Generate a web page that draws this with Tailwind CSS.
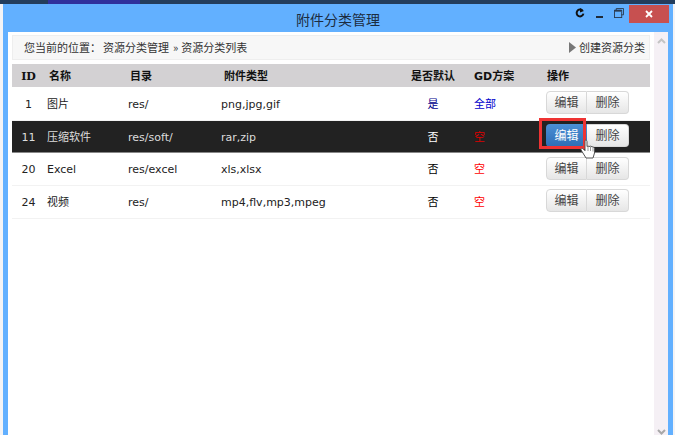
<!doctype html>
<html>
<head>
  <meta charset="UTF-8">
  <script src="https://cdn.jsdelivr.net/npm/@tailwindcss/browser@4"></script>
</head>
<body class="bg-white">
  <div class="w-[675px] h-[435px] overflow-hidden relative flex flex-col bg-[#f4f4f6] font-['DejaVu_Sans','Noto_Sans_CJK_SC',sans-serif] text-[11px] text-[#222]">
    <!-- taskbar strip behind the dialog -->
    <div class="h-[4px] shrink-0 bg-[#233d5c] flex pl-[48px]">
      <div class="w-[92px] bg-[#30309c]"></div>
    </div>
    <div class="flex-1 ml-[3px] mr-[2px] bg-[#62b0ff] flex flex-col px-[5px] min-h-0">
      <!-- title bar -->
      <div class="h-[28px] shrink-0 relative flex items-center justify-center pt-[4px] text-[14px] text-[#1c2c40]">
        <span class="font-['Noto_Sans_CJK_SC',sans-serif] mb-[2px]">附件分类管理</span>
        <div class="absolute right-[-1px] top-[1px] h-[18px] flex items-start">
          <svg class="mt-[3px]" width="10" height="10" viewBox="0 0 10 10"><path d="M7.500 2.600A3.400 3.400 0 1 0 8.400 5.600" fill="none" stroke="#111" stroke-width="2"/><path d="M5 0l4 3-4 1.500z" fill="#111"/></svg>
          <div class="ml-[11px] mt-[11px] w-[7px] h-[2px] bg-[#1f2b3a]"></div>
          <svg class="ml-[11px] mt-[3px]" width="10" height="10" viewBox="0 0 11 11"><path d="M2.500 2.500V.5h8v7h-2.500" fill="none" stroke="#2a3a50"/><rect x="0.500" y="2.500" width="8" height="8" fill="none" stroke="#2a3a50"/><rect x="1" y="2" width="7" height="2" fill="#2a3a50"/></svg>
          <div class="ml-[5px] w-[40px] h-[18px] bg-[#c75050] flex items-center justify-center">
            <svg width="8" height="8" viewBox="0 0 8 8"><path d="M1 1l6 6M7 1L1 7" stroke="#fff" stroke-width="1.800"/></svg>
          </div>
        </div>
      </div>
      <div class="flex-1 flex bg-white min-h-0 relative">
        <div class="flex-1 pt-[3px] px-[4px]">
          <!-- breadcrumb -->
          <div class="h-[25px] bg-[#f7f7f7] border border-[#eeeeee] flex items-center justify-between pl-[11px] pr-[4px] font-['Noto_Sans_CJK_SC',sans-serif] text-[#333]">
            <div><span class="mr-[2px]">您当前的位置：</span>资源分类管理<span class="ml-[4px] mr-[3px]">»</span>资源分类列表</div>
            <div class="flex items-center gap-[3px]">
              <svg width="7" height="11" viewBox="0 0 7 11"><path d="M0 0l7 5.500L0 11z" fill="#777"/></svg>
              创建资源分类
            </div>
          </div>
          <!-- table -->
          <div class="mt-[4px] h-[23px] pt-[3px] bg-[#d3d1d3] flex items-center font-bold text-[#111]">
            <div class="w-[33px] text-center font-['DejaVu_Serif',serif]">ID</div>
            <div class="w-[82px] pl-[4px]">名称</div>
            <div class="w-[94px] pl-[3px]">目录</div>
            <div class="w-[179px] pl-[3px]">附件类型</div>
            <div class="w-[66px] text-center">是否默认</div>
            <div class="w-[80px] pl-[8px]">GD方案</div>
            <div class="pl-[1px]">操作</div>
          </div>
          <div class="h-[33px] mt-[1px] pt-[2px] border-b border-[#f2f2f2] flex items-center">
            <div class="w-[33px] text-center">1</div>
            <div class="w-[82px] pl-[2px]">图片</div>
            <div class="w-[94px] pl-[1px]">res/</div>
            <div class="w-[179px]">png,jpg,gif</div>
            <div class="w-[66px] text-center text-[#00008b]">是</div>
            <div class="w-[80px] pl-[8px] text-[#0000cc]">全部</div>
            <div class="flex self-start mt-[1px]">
              <div class="w-[41px] h-[23px] rounded-l-[4px] border border-[#d8d8d8] bg-gradient-to-b from-white to-[#e6e6e6] flex items-center justify-center text-[12px] text-[#444]">编辑</div>
              <div class="w-[42px] h-[23px] rounded-r-[4px] border border-l-0 border-[#d8d8d8] bg-gradient-to-b from-white to-[#e6e6e6] flex items-center justify-center text-[12px] text-[#444]">删除</div>
            </div>
          </div>
          <div class="h-[32px] pt-[3px] bg-[#222222] border-b border-[#888] flex items-center text-[#dddddd]">
            <div class="w-[33px] text-center">11</div>
            <div class="w-[82px] pl-[2px]">压缩软件</div>
            <div class="w-[94px] pl-[1px]">res/soft/</div>
            <div class="w-[179px]">rar,zip</div>
            <div class="w-[66px] text-center text-white">否</div>
            <div class="w-[80px] pl-[8px] text-[#dd0000]">空</div>
            <div class="flex self-start">
              <div class="w-[41px] h-[23px] rounded-l-[4px] bg-gradient-to-b from-[#4b90d6] to-[#2d6db5] flex items-center justify-center text-[12px] text-white">编辑</div>
              <div class="w-[42px] h-[23px] rounded-r-[4px] border border-l-0 border-[#d8d8d8] bg-gradient-to-b from-white to-[#e6e6e6] flex items-center justify-center text-[12px] text-[#444]">删除</div>
            </div>
          </div>
          <div class="h-[33px] pt-[3px] border-b border-[#f2f2f2] flex items-center">
            <div class="w-[33px] text-center">20</div>
            <div class="w-[82px] pl-[2px]">Excel</div>
            <div class="w-[94px] pl-[1px]">res/excel</div>
            <div class="w-[179px]">xls,xlsx</div>
            <div class="w-[66px] text-center text-black">否</div>
            <div class="w-[80px] pl-[8px] text-[#ff0000]">空</div>
            <div class="flex self-start mt-[1px]">
              <div class="w-[41px] h-[23px] rounded-l-[4px] border border-[#d8d8d8] bg-gradient-to-b from-white to-[#e6e6e6] flex items-center justify-center text-[12px] text-[#444]">编辑</div>
              <div class="w-[42px] h-[23px] rounded-r-[4px] border border-l-0 border-[#d8d8d8] bg-gradient-to-b from-white to-[#e6e6e6] flex items-center justify-center text-[12px] text-[#444]">删除</div>
            </div>
          </div>
          <div class="h-[33px] pt-[3px] border-b border-[#f2f2f2] flex items-center">
            <div class="w-[33px] text-center">24</div>
            <div class="w-[82px] pl-[2px]">视频</div>
            <div class="w-[94px] pl-[1px]">res/</div>
            <div class="w-[179px]">mp4,flv,mp3,mpeg</div>
            <div class="w-[66px] text-center text-black">否</div>
            <div class="w-[80px] pl-[8px] text-[#ff0000]">空</div>
            <div class="flex self-start">
              <div class="w-[41px] h-[23px] rounded-l-[4px] border border-[#d8d8d8] bg-gradient-to-b from-white to-[#e6e6e6] flex items-center justify-center text-[12px] text-[#444]">编辑</div>
              <div class="w-[42px] h-[23px] rounded-r-[4px] border border-l-0 border-[#d8d8d8] bg-gradient-to-b from-white to-[#e6e6e6] flex items-center justify-center text-[12px] text-[#444]">删除</div>
            </div>
          </div>
        </div>
        <!-- scrollbar -->
        <div class="w-[14px] shrink-0 bg-[#f5f0f5] flex flex-col items-center justify-between pt-[6px]">
          <svg width="9" height="6" viewBox="0 0 9 6"><path d="M1 5l3.500-3.500L8 5" fill="none" stroke="#c4c4c4" stroke-width="2"/></svg>
          <svg width="9" height="6" viewBox="0 0 9 6"><path d="M1 1l3.500 3.500L8 1" fill="none" stroke="#a8a8a8" stroke-width="2"/></svg>
        </div>
      </div>
    </div>
    <!-- annotation and pointer drawn over the screenshot -->
    <div class="absolute left-[539px] top-[118px] w-[47px] h-[31px] border-[3px] border-[#ee3333]"></div>
    <svg class="absolute left-[580px] top-[139px]" width="17" height="21" viewBox="0 0 17 21">
      <path d="M5 1.500c1-.8 2 0 2 1v5l1-.5 1 .5 1.500-.3 1.500.6 1.500.2 1 1.500v4.500l-1.500 5H6l-4-6.500-1-2c0-1 1-1.500 2-.8l2 2z" fill="#fff" stroke="#555" stroke-width="1"/>
      <path d="M8 8v4M10.500 8v4M13 8.500v4" stroke="#999" stroke-width="1" fill="none"/>
    </svg>
  </div>
</body>
</html>
